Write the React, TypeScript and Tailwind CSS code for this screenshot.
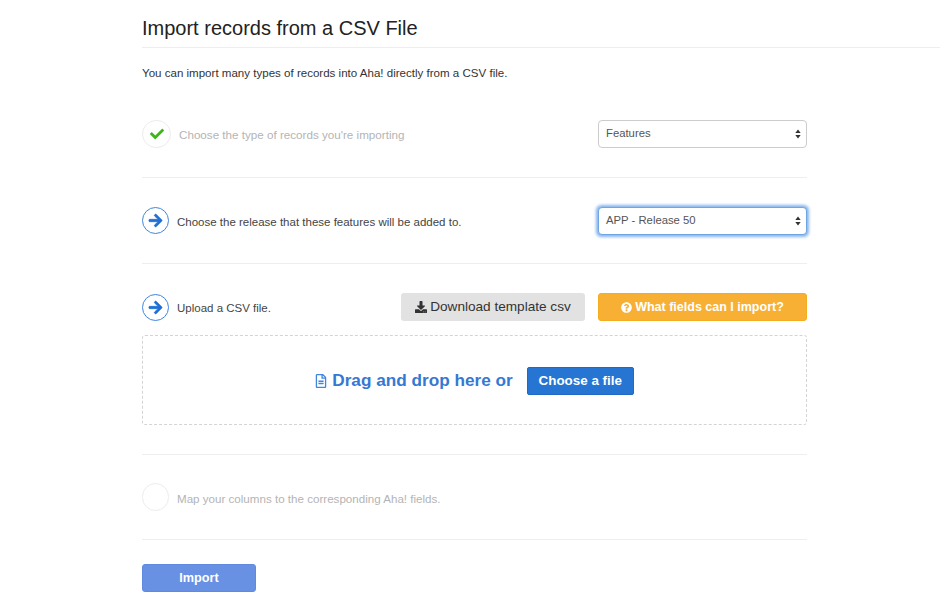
import React from 'react';
import { FaArrowRight, FaCheck, FaDownload, FaQuestionCircle, FaRegFileAlt } from 'react-icons/fa';

const StepIcon: React.FC<{ state: 'done' | 'active' | 'idle' }> = ({ state }) => {
  if (state === 'active') {
    return (
      <div className="flex h-[27px] w-[27px] shrink-0 items-center justify-center rounded-full border-[1.5px] border-[#3f86dc] bg-white">
        <FaArrowRight className="h-[15px] w-[15px] text-[#2070d4]" stroke="currentColor" strokeWidth={24} />
      </div>
    );
  }
  if (state === 'idle') {
    return <div className="h-[28px] w-[27px] shrink-0 rounded-full border border-[#ececec] bg-white" />;
  }
  return (
    <div className="flex h-[28px] w-[29px] shrink-0 items-center justify-center rounded-full border border-[#ececec] bg-white">
      <FaCheck className="h-[14px] w-[14px] text-[#3fb618]" />
    </div>
  );
};

const SelectBox: React.FC<{ label: string; focused?: boolean }> = ({ label, focused = false }) => (
  <div
    className={
      'flex h-[28px] w-[209px] items-center justify-between rounded-[4px] border bg-white pb-[1px] pl-[7px] pr-[5px] text-[11.3px] text-[#555555] ' +
      (focused ? 'border-[#6fa5e0] shadow-[0_0_3px_1.5px_rgba(82,150,230,0.7)]' : 'border-[#cccccc]')
    }
  >
    <span>{label}</span>
    <svg width="6" height="10" viewBox="0 0 6 10" className="text-[#333333]">
      <path d="M3 0.5 L5.7 4 L0.3 4 Z M3 9.5 L5.7 6 L0.3 6 Z" fill="currentColor" />
    </svg>
  </div>
);

export default function App() {
  return (
    <div className="h-[611px] w-[940px] overflow-hidden bg-white pl-[142px] font-['Liberation_Sans',Arial,sans-serif]">
      <h1 className="h-[48px] border-b border-[#eeeeee] pt-[16px] text-[20px] leading-[24px] font-normal text-[#222222]">
        Import records from a CSV File
      </h1>
      <p className="mt-[17px] text-[11.56px] leading-[16px] text-[#333333]">
        You can import many types of records into Aha! directly from a CSV file.
      </p>

      <div className="w-[665px]">
        <section className="flex h-[97px] items-start justify-between border-b border-[#eeeeee] pt-[39px]">
          <div className="flex items-center gap-[8px]">
            <StepIcon state="done" />
            <span className="mt-[2px] text-[11.65px] text-[#b4b4b4]">Choose the type of records you're importing</span>
          </div>
          <SelectBox label="Features" />
        </section>

        <section className="flex h-[86px] items-start justify-between border-b border-[#eeeeee] pt-[29px]">
          <div className="flex items-center gap-[8px]">
            <StepIcon state="active" />
            <span className="mt-[4px] text-[11.5px] text-[#444444]">Choose the release that these features will be added to.</span>
          </div>
          <SelectBox label="APP - Release 50" focused />
        </section>

        <section className="h-[191px] border-b border-[#eeeeee] pt-[29px]">
          <div className="flex items-center justify-between">
            <div className="flex items-center gap-[8px]">
              <StepIcon state="active" />
              <span className="mt-[4px] text-[11.5px] text-[#444444]">Upload a CSV file.</span>
            </div>
            <div className="flex gap-[13px]">
              <button className="flex h-[28px] w-[184px] items-center justify-center gap-[3px] rounded-[3px] bg-[#e2e2e2] text-[13.6px] text-[#333333]">
                <FaDownload className="h-[12px] w-[12px]" />
                Download template csv
              </button>
              <button className="flex h-[28px] w-[209px] items-center justify-center gap-[3px] rounded-[3px] border border-[#f5ac1e] bg-[#f7b034] text-[12.5px] font-bold text-white">
                <FaQuestionCircle className="h-[11px] w-[11px]" />
                What fields can I import?
              </button>
            </div>
          </div>
          <div className="mt-[14px] flex h-[90px] items-center justify-center rounded-[3px] border border-dashed border-[#d4d4d4] pt-[2px]">
            <FaRegFileAlt className="h-[14px] w-[12px] text-[#3f86dc]" />
            <span className="ml-[5px] text-[17.2px] font-bold text-[#3578d3]">Drag and drop here or</span>
            <button className="ml-[14px] h-[28px] w-[107px] rounded-[2px] border border-[#2069c4] bg-[#2675d3] text-[13.4px] font-bold text-white">
              Choose a file
            </button>
          </div>
        </section>

        <section className="flex h-[85px] items-start border-b border-[#eeeeee] pt-[28px]">
          <div className="flex items-center gap-[8px]">
            <StepIcon state="idle" />
            <span className="mt-[4px] text-[11.6px] text-[#b4b4b4]">Map your columns to the corresponding Aha! fields.</span>
          </div>
        </section>

        <button className="mt-[24px] h-[28px] w-[114px] rounded-[3px] border border-[#5f8ae0] bg-[#6890e3] pt-[2px] text-[12.7px] font-bold text-white">
          Import
        </button>
      </div>
    </div>
  );
}
